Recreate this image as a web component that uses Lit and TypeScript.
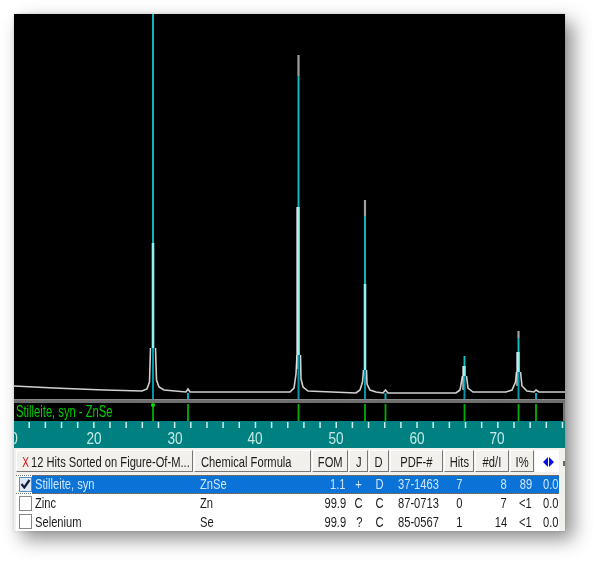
import { LitElement, html, css, svg } from "lit";
import { customElement } from "lit/decorators.js";

const W = 551;
const CHART_H = 385;
// Coordinates in the chart's own space (origin at the window's top-left corner).
const peaks = [
  { x: 139, grey: 0, teal: 0, cyan: 229, env: 334, white: false },
  { x: 284.5, grey: 41, teal: 62, cyan: 193, env: 341, white: true },
  { x: 351, grey: 186, teal: 202, cyan: 270, env: 356, white: false },
  { x: 450.5, grey: 342, teal: 342, cyan: 352, env: 362, white: true },
  { x: 504.5, grey: 317, teal: 324, cyan: 338, env: 358, white: true },
];
const minor = [174, 371.5, 522];
const sticks = [139, 174, 284.5, 351, 371.5, 450.5, 504.5, 522];
const baseline =
  "M0 372 L40 374 L90 376 L128 377 L133 375 L135.500 368 L136.500 334 M141.500 334 L142.500 366 L145 373 L150 376 L172 378 L174 375 L176 378 L276 378 L280 374 L282 360 L283 341 M286.500 341 L287 365 L289 373 L294 377 L342 379 L346 376 L348.500 368 L349.500 356 M352.500 356 L353 370 L356 376 L362 378 L369 379 L371.500 376 L374 379 L442 379 L446 376 L448.500 362 M452.500 362 L454 374 L459 378 L492 378 L498 376 L501.500 368 L502.500 358 M506.500 358 L508 372 L513 377 L520 378 L522 376 L525 378 L551 378";

const ticks = Array.from({ length: 34 }, (_, i) => 15.2 + i * 16.16);
const labels = [
  [0, "0"],
  [80, "20"],
  [161, "30"],
  [241, "40"],
  [322, "50"],
  [403, "60"],
  [483, "70"],
] as const;

const rows = [
  { name: "Stilleite, syn", f: "ZnSe", fom: "1.1", j: "+", d: "D", pdf: "37-1463", hits: "7", n: "8", pct: "89", last: "0.0", on: true },
  { name: "Zinc", f: "Zn", fom: "99.9", j: "C", d: "C", pdf: "87-0713", hits: "0", n: "7", pct: "<1", last: "0.0", on: false },
  { name: "Selenium", f: "Se", fom: "99.9", j: "?", d: "C", pdf: "85-0567", hits: "1", n: "14", pct: "<1", last: "0.0", on: false },
];

@customElement("app-root")
export class AppRoot extends LitElement {
  static styles = css`
    :host {
      display: block;
      width: 600px;
      height: 565px;
      background: #fff;
      padding: 14px 0 0 14px;
      box-sizing: border-box;
      overflow: hidden;
      font-family: "Liberation Sans", Arial, sans-serif;
    }
    .window {
      width: 551px;
      height: 517px;
      background: #fff;
      box-shadow: 8px 8px 18px rgba(0, 0, 0, 0.45), 0 0 3px rgba(0, 0, 0, 0.15);
      overflow: hidden;
    }
    .blur {
      filter: blur(0.6px);
      display: flex;
      flex-direction: column;
      height: 100%;
    }
    svg {
      display: block;
    }
    .divider {
      height: 4px;
      background: #6e6e6e;
      border-top: 1px solid #8a8a8a;
      box-sizing: border-box;
    }
    .band {
      position: relative;
      height: 18px;
      background: #000;
      border-right: 2px solid #777;
      box-sizing: border-box;
    }
    .band-title {
      position: absolute;
      left: 2px;
      top: 0;
      color: #00cc00;
      font-size: 16px;
      line-height: 17px;
      transform: scaleX(0.7);
      transform-origin: left center;
      white-space: nowrap;
    }
    .band svg {
      position: absolute;
      inset: 0;
    }
    .ruler {
      height: 27px;
      background: #008080;
    }
    .ruler text {
      fill: #c4ebe6;
      font-size: 16px;
      font-family: "Liberation Sans", Arial, sans-serif;
      text-anchor: middle;
    }
    .table {
      flex: 1;
      min-height: 0;
      background: #f1f0ec;
      display: flex;
      flex-direction: column;
      padding-top: 2px;
      font-size: 15.5px;
      color: #1c1c1c;
    }
    .grid {
      display: grid;
      grid-template-columns: 178px 118px 37px 20px 21px 54px 31px 35px 25px 24px 6px;
      margin-left: 2px;
    }
    .head {
      height: 22px;
    }
    .hc {
      box-sizing: border-box;
      background: #f1f0ec;
      border: 1px solid;
      border-color: #fff #777 #777 #fff;
      margin-right: 1px;
      display: flex;
      align-items: center;
      justify-content: center;
      white-space: nowrap;
      line-height: 1;
      padding-top: 1px;
    }
    .hc.first,
    .hc.second {
      justify-content: flex-start;
    }
    .hc.first {
      padding-left: 4px;
    }
    .hc.second {
      padding-left: 6px;
    }
    .hc.arrows {
      background: #fff;
      margin-right: 0;
      border: none;
      padding-left: 2px;
    }
    .mark {
      justify-self: end;
      align-self: center;
      width: 2px;
      height: 5px;
      background: #666;
      margin: 5px 0 0;
    }
    .x {
      color: #e01010;
      margin-right: 1px;
      display: inline-block;
      transform: scaleX(0.72);
      font-size: 14px;
    }
    .t {
      display: inline-block;
      white-space: nowrap;
      transform: scaleX(0.72);
    }
    .hc .t {
      transform-origin: center;
    }
    .hc.first .t,
    .hc.second .t,
    .c-l .t,
    .name .t {
      transform-origin: left center;
    }
    .hc.first .t {
      margin-right: -60px;
    }
    .hc.second .t {
      margin-right: -30px;
    }
    .c-r .t {
      transform-origin: right center;
    }
    .sep {
      height: 3px;
    }
    .list {
      display: flex;
      flex-direction: column;
      background: #fff;
      margin-left: 2px;
      flex: 1;
      min-height: 0;
      width: 543px;
    }
    .row {
      display: grid;
      grid-template-columns: 178px 118px 37px 20px 21px 54px 31px 35px 25px 24px;
      height: 19px;
      align-items: center;
      line-height: 16px;
      color: #1c1c1c;
      white-space: nowrap;
    }
    .row.on {
      color: #cfe6ff;
      border-top: 1px dotted #777;
      border-bottom: 1px dotted #777;
      height: 17px;
      background: linear-gradient(90deg, #fff 16px, #0b72d7 16px);
    }
    .name {
      display: flex;
      align-items: center;
      padding-left: 3px;
      gap: 3px;
    }
    .box {
      width: 11px;
      height: 13px;
      flex: none;
      border: 1px solid #888;
      background: #fff;
      display: flex;
      align-items: center;
      justify-content: center;
    }
    .on .box {
      border-color: #5b8fc0;
      background: #dfe9f5;
    }
    .c-l {
      padding-left: 6px;
    }
    .c-r {
      text-align: right;
      padding-right: 3px;
    }
    .c-r.end {
      padding-right: 0;
    }
    .c-c {
      text-align: center;
    }
  `;

  private spectrum() {
    return svg`
      <path d=${baseline} fill="none" stroke="#d0d0d0" stroke-width="1.6"/>
      ${peaks.map(
        (p) => svg`
          <line x1=${p.x} x2=${p.x} y1=${p.grey} y2=${p.teal} stroke="#a0a0a0" stroke-width="2.2"/>
          <line x1=${p.x} x2=${p.x} y1=${p.teal} y2=${p.cyan} stroke="#10c0c0" stroke-width="1.9"/>
          <line x1=${p.x} x2=${p.x} y1=${p.cyan} y2=${p.env} stroke="#8df2f2" stroke-width="2.6"/>
          ${p.white
            ? svg`<line x1=${p.x - 1.4} x2=${p.x - 1.4} y1=${p.cyan} y2=${p.env + 14} stroke="#f0f0f0" stroke-width="1.4"/>`
            : null}
          <line x1=${p.x} x2=${p.x} y1=${p.env} y2=${CHART_H} stroke="#0098a8" stroke-width="2"/>
        `
      )}
      ${minor.map(
        (x) => svg`<line x1=${x} x2=${x} y1="379" y2=${CHART_H} stroke="#00b0c0" stroke-width="2"/>`
      )}
    `;
  }

  render() {
    return html`
      <div class="window">
        <div class="blur">
          <svg width=${W} height=${CHART_H} viewBox="0 0 ${W} ${CHART_H}" style="background:#000">
            ${this.spectrum()}
          </svg>
          <div class="divider"></div>
          <div class="band">
            <svg width=${W} height="18" viewBox="0 0 ${W} 18">
              ${sticks.map(
                (x) => svg`<line x1=${x} x2=${x} y1="1" y2="18" stroke="#00b000" stroke-width="1.8"/>`
              )}
              <circle cx="139" cy="2" r="2" fill="#00e000"/>
            </svg>
            <span class="band-title">Stilleite, syn - ZnSe</span>
          </div>
          <div class="ruler">
            <svg width=${W} height="27" viewBox="0 0 ${W} 27">
              ${ticks.map(
                (x) => svg`<line x1=${x} x2=${x} y1="1" y2="7" stroke="#cfeeea" stroke-width="1.5"/>`
              )}
              ${labels.map(
                ([x, l]) => svg`<text x=${x} y="23" transform="translate(${x} 0) scale(0.85 1) translate(${-x} 0)">${l}</text>`
              )}
            </svg>
          </div>
          <div class="table">
            <div class="grid head">
              <div class="hc first">
                <span class="x">X</span><span class="t">12 Hits Sorted on Figure-Of-M...</span>
              </div>
              <div class="hc second"><span class="t">Chemical Formula</span></div>
              <div class="hc"><span class="t">FOM</span></div>
              <div class="hc"><span class="t">J</span></div>
              <div class="hc"><span class="t">D</span></div>
              <div class="hc"><span class="t">PDF-#</span></div>
              <div class="hc"><span class="t">Hits</span></div>
              <div class="hc"><span class="t">#d/I</span></div>
              <div class="hc"><span class="t">I%</span></div>
              <div class="hc arrows">
                <svg width="11" height="10" viewBox="0 0 11 10">
                  <path d="M5 0 L0 5 L5 10 Z M6 0 L11 5 L6 10 Z" fill="#0a10e0" />
                </svg>
              </div>
              <div class="mark"></div>
            </div>
            <div class="sep"></div>
            <div class="list">
              ${rows.map(
                (r) => html`
                  <div class="row ${r.on ? "on" : ""}">
                    <div class="name">
                      <span class="box">
                        ${r.on
                          ? html`<svg width="11" height="10" viewBox="0 0 11 10">
                              <path d="M1.500 5 L4.300 8.500 L9.500 1" fill="none" stroke="#10203c" stroke-width="2.200" />
                            </svg>`
                          : null}
                      </span>
                      <span class="t">${r.name}</span>
                    </div>
                    <div class="c-l"><span class="t">${r.f}</span></div>
                    <div class="c-r"><span class="t">${r.fom}</span></div>
                    <div class="c-c"><span class="t">${r.j}</span></div>
                    <div class="c-c"><span class="t">${r.d}</span></div>
                    <div class="c-c"><span class="t">${r.pdf}</span></div>
                    <div class="c-c"><span class="t">${r.hits}</span></div>
                    <div class="c-r"><span class="t">${r.n}</span></div>
                    <div class="c-r"><span class="t">${r.pct}</span></div>
                    <div class="c-r end"><span class="t">${r.last}</span></div>
                  </div>
                `
              )}
            </div>
          </div>
        </div>
      </div>
    `;
  }
}
